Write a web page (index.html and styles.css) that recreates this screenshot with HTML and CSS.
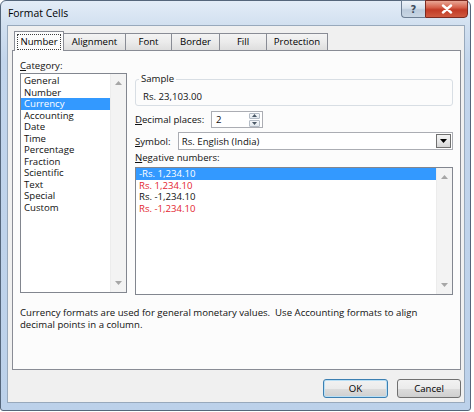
FILE: index.html
```html
<!DOCTYPE html>
<html>
<head>
<meta charset="utf-8">
<title>Format Cells</title>
<link rel="stylesheet" href="styles.css">
</head>
<body>
<div class="window">
  <div class="titlebar">
    <span class="title">Format Cells</span>
    <div class="caption-btns">
      <div class="cap help">?</div>
      <div class="cap close">
        <svg width="12" height="10" viewBox="0 0 12 10"><path d="M2 1.5 L10 8.5 M10 1.5 L2 8.5" stroke="#fff" stroke-width="2.4" stroke-linecap="round"/></svg>
      </div>
    </div>
  </div>
  <div class="client">
    <div class="tabs">
      <div class="tab active w-number"><span class="focus">Number</span></div>
      <div class="tab w-align">Alignment</div>
      <div class="tab w-font">Font</div>
      <div class="tab w-border">Border</div>
      <div class="tab w-fill">Fill</div>
      <div class="tab w-prot">Protection</div>
    </div>
    <div class="panel">
      <div class="top">
        <div class="left">
          <div class="label"><u>C</u>ategory:</div>
          <div class="listbox cat">
            <div class="items">
              <div class="item">General</div>
              <div class="item">Number</div>
              <div class="item sel">Currency</div>
              <div class="item">Accounting</div>
              <div class="item">Date</div>
              <div class="item">Time</div>
              <div class="item">Percentage</div>
              <div class="item">Fraction</div>
              <div class="item">Scientific</div>
              <div class="item">Text</div>
              <div class="item">Special</div>
              <div class="item">Custom</div>
            </div>
            <div class="vscroll">
              <svg width="7" height="4" viewBox="0 0 7 4"><path d="M0 4 L3.5 0 L7 4 Z" fill="#a6a6a6"/></svg>
              <svg width="7" height="4" viewBox="0 0 7 4"><path d="M0 0 L7 0 L3.5 4 Z" fill="#a6a6a6"/></svg>
            </div>
          </div>
        </div>
        <div class="right">
          <fieldset class="sample">
            <legend>Sample</legend>
            <div class="sample-val">Rs. 23,103.00</div>
          </fieldset>
          <div class="row dec">
            <span class="lbl-dec"><u>D</u>ecimal places:</span>
            <div class="spin">
              <span>2</span>
              <div class="spin-btns">
                <div class="sb"><svg width="5" height="3" viewBox="0 0 5 3"><path d="M0 3 L2.5 0 L5 3 Z" fill="#4a5866"/></svg></div>
                <div class="sb"><svg width="5" height="3" viewBox="0 0 5 3"><path d="M0 0 L5 0 L2.5 3 Z" fill="#4a5866"/></svg></div>
              </div>
            </div>
          </div>
          <div class="row sym">
            <span class="lbl-sym"><u>S</u>ymbol:</span>
            <div class="combo">
              <span>Rs. English (India)</span>
              <div class="combo-btn"><svg width="7" height="4" viewBox="0 0 7 4"><path d="M0 0 L7 0 L3.5 4 Z" fill="#000"/></svg></div>
            </div>
          </div>
          <div class="label neg-label"><u>N</u>egative numbers:</div>
          <div class="listbox neg">
            <div class="items">
              <div class="item sel">-Rs. 1,234.10</div>
              <div class="item red">Rs. 1,234.10</div>
              <div class="item">Rs. -1,234.10</div>
              <div class="item red">Rs. -1,234.10</div>
            </div>
            <div class="vscroll">
              <svg width="7" height="4" viewBox="0 0 7 4"><path d="M0 4 L3.5 0 L7 4 Z" fill="#a6a6a6"/></svg>
              <svg width="7" height="4" viewBox="0 0 7 4"><path d="M0 0 L7 0 L3.5 4 Z" fill="#a6a6a6"/></svg>
            </div>
          </div>
        </div>
      </div>
      <p class="desc">Currency formats are used for general monetary values.&nbsp; Use Accounting formats to align<br>decimal points in a column.</p>
    </div>
    <div class="buttons">
      <button class="btn default">OK</button>
      <button class="btn cancel">Cancel</button>
    </div>
  </div>
</div>
</body>
</html>
```

FILE: styles.css
```css
body {
  margin: 0;
  background: #ffffff;
  font-family: "Open Sans", "Noto Sans", sans-serif;
  font-size: 9.6px;
  color: #111111;
}

.window {
  box-sizing: border-box;
  width: 471px;
  height: 411px;
  border: 1px solid #55667b;
  border-radius: 6px 6px 3px 3px;
  background: linear-gradient(180deg, #e3ecf7 0, #d2e0f0 24px, #c2d5ec 60px, #bcd1ea 100%);
  display: flex;
  flex-direction: column;
}

.titlebar {
  height: 24px;
  display: flex;
  align-items: flex-start;
  flex-shrink: 0;
}

.title {
  font-size: 10.4px;
  line-height: 13px;
  margin: 6px 0 0 7px;
  color: #000;
}

.caption-btns {
  margin-left: auto;
  margin-right: 2px;
  margin-top: -1px;
  display: flex;
}

.cap {
  box-sizing: border-box;
  height: 18px;
  display: flex;
  align-items: center;
  justify-content: center;
}

.help {
  width: 24px;
  border: 1px solid #6d7e93;
  border-right: none;
  border-radius: 0 0 0 4px;
  background: linear-gradient(180deg, #eef3f9 0, #d5e0ec 45%, #bccbdc 55%, #c9d6e4 100%);
  color: #3e4c5c;
  font-family: "DejaVu Sans", sans-serif;
  font-size: 10px;
  font-weight: bold;
}

.close {
  width: 43px;
  border: 1px solid #7b2a20;
  border-radius: 0 0 4px 0;
  background: linear-gradient(180deg, #e9a796 0, #d6624c 40%, #c23b26 55%, #cf5a40 100%);
}

.client {
  flex: 1;
  margin: 0 5px 7px 6px;
  border: 1px solid #98a9bc;
  background: #f0f0f0;
  padding: 5px 3px 0 4px;
  display: flex;
  flex-direction: column;
}

.tabs {
  height: 19px;
  display: flex;
  align-items: flex-end;
  padding-left: 2px;
  position: relative;
  z-index: 1;
}

.tab {
  box-sizing: border-box;
  height: 17px;
  border: 1px solid #898c95;
  border-bottom: none;
  margin-left: -1px;
  background: linear-gradient(180deg, #f4f4f4 0, #ebebeb 50%, #dedede 100%);
  display: flex;
  align-items: center;
  justify-content: center;
  line-height: 12px;
  color: #000;
}

.tab:first-child {
  margin-left: 0;
}

.tab.active {
  height: 20px;
  margin-bottom: -1px;
  background: #fcfcfc;
  position: relative;
  z-index: 2;
}

.focus {
  outline: 1px dotted #404040;
  padding: 1px 2px;
}

.w-number { width: 50px; }
.w-align { width: 63px; }
.w-font { width: 47px; }
.w-border { width: 49px; }
.w-fill { width: 48px; }
.w-prot { width: 62px; }

.panel {
  box-sizing: border-box;
  height: 320px;
  border: 1px solid #898c95;
  background: #fcfcfc;
  flex-shrink: 0;
}

.top {
  display: flex;
  gap: 8px;
  padding-left: 7px;
}

.left {
  width: 107px;
  padding-top: 9px;
}

.label {
  line-height: 12px;
  height: 12px;
}

.listbox {
  box-sizing: border-box;
  border: 1px solid #82868f;
  background: #fff;
  display: flex;
  margin-top: 1px;
}

.cat {
  height: 220px;
}

.items {
  flex: 1;
  min-width: 0;
}

.cat .items {
  padding-top: 1px;
}

.item {
  height: 11.5px;
  line-height: 11.5px;
  padding-left: 3px;
  white-space: nowrap;
}

.item.sel {
  background: #3399ff;
  color: #fff;
}

.item.red {
  color: #e3262f;
}

.vscroll {
  width: 15px;
  background: #f3f3f3;
  border-left: 1px solid #ececec;
  display: flex;
  flex-direction: column;
  justify-content: space-between;
  align-items: center;
  padding: 7px 0 7px;
}

.right {
  width: 318px;
  padding-top: 22px;
}

.sample {
  margin: 0;
  padding: 6px 7px 2px;
  border: 1px solid #d8dee4;
  border-radius: 3px;
  min-width: 0;
}

.sample legend {
  padding: 0 2px;
  margin-left: -4px;
  line-height: 12px;
}

.sample-val {
  line-height: 12px;
}

.row {
  display: flex;
  align-items: center;
}

.dec {
  margin-top: 5px;
  height: 17px;
}

.lbl-dec {
  width: 76px;
}

.spin {
  box-sizing: border-box;
  width: 52px;
  height: 17px;
  border: 1px solid #abadb3;
  background: #fff;
  display: flex;
  align-items: center;
  padding-left: 4px;
}

.spin-btns {
  margin-left: auto;
  margin-right: 2px;
  display: flex;
  flex-direction: column;
  gap: 1px;
}

.sb {
  box-sizing: border-box;
  width: 11px;
  height: 6.5px;
  border: 1px solid #b4bcc6;
  border-radius: 1px;
  background: linear-gradient(180deg, #f6f8fa, #e2e8ee);
  display: flex;
  align-items: center;
  justify-content: center;
}

.sym {
  margin-top: 4px;
  height: 18px;
}

.lbl-sym {
  width: 43px;
}

.combo {
  box-sizing: border-box;
  width: 276px;
  height: 18px;
  border: 1px solid #abadb3;
  background: #fff;
  display: flex;
  align-items: center;
  padding-left: 3px;
}

.combo-btn {
  box-sizing: border-box;
  margin-left: auto;
  margin-right: 1px;
  width: 15px;
  height: 14px;
  border: 1px solid #707070;
  background: linear-gradient(180deg, #f3f3f3 0, #e8e8e8 50%, #d6d6d6 100%);
  display: flex;
  align-items: center;
  justify-content: center;
}

.neg-label {
  margin-top: 2px;
}

.neg {
  height: 128px;
  margin-top: 3px;
}

.desc {
  margin: 12px 0 0 7px;
  line-height: 11.5px;
}

.buttons {
  display: flex;
  justify-content: flex-end;
  gap: 9px;
  margin-top: 9px;
}

.btn {
  box-sizing: border-box;
  height: 19px;
  width: 64px;
  padding: 0;
  border: 1px solid #707070;
  border-radius: 3px;
  background: linear-gradient(180deg, #f2f2f2 0, #ebebeb 50%, #dddddd 50%, #cfcfcf 100%);
  font-family: inherit;
  font-size: 9.6px;
  color: #000;
}

.btn.default {
  width: 65px;
  border-color: #3c7fb1;
  box-shadow: inset 0 0 0 1px #b9dff5;
}
```
